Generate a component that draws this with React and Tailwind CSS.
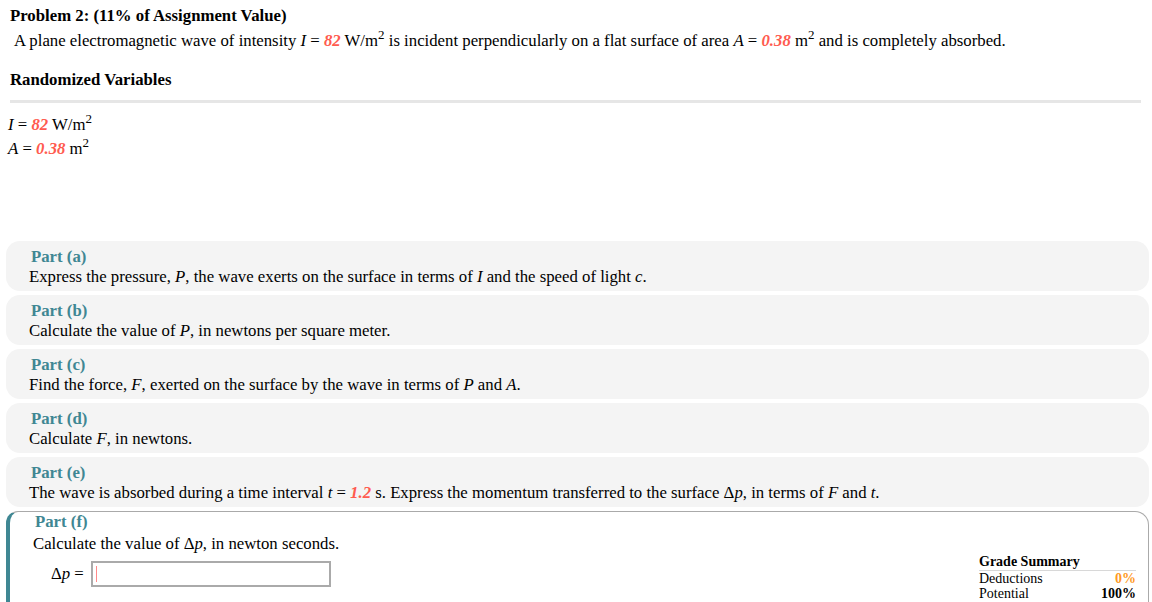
import React from 'react';

const V = ({ children }) => <span className="italic font-bold text-[#ff5b4f]">{children}</span>;
const I = ({ children }) => <span className="italic">{children}</span>;
const Sup = () => <sup className="text-[13px] relative -top-[7px]">2</sup>;

const parts = [
  { label: 'Part (a)', body: <>Express the pressure, <I>P</I>, the wave exerts on the surface in terms of <I>I</I> and the speed of light <I>c</I>.</> },
  { label: 'Part (b)', body: <>Calculate the value of <I>P</I>, in newtons per square meter.</> },
  { label: 'Part (c)', body: <>Find the force, <I>F</I>, exerted on the surface by the wave in terms of <I>P</I> and <I>A</I>.</> },
  { label: 'Part (d)', body: <>Calculate <I>F</I>, in newtons.</> },
  { label: 'Part (e)', body: <>The wave is absorbed during a time interval <I>t</I> = <V>1.2</V> s. Express the momentum transferred to the surface Δ<I>p</I>, in terms of <I>F</I> and <I>t</I>.</> },
];

export default function App() {
  return (
    <div className="h-[602px] overflow-hidden bg-white text-black text-[16.75px] leading-[20px] font-['Liberation_Serif','Times_New_Roman',serif]">
      <div className="pl-[10px] pt-[6px] font-bold">Problem 2: (11% of Assignment Value)</div>
      <div className="pl-[14px] pt-[5px]">
        A plane electromagnetic wave of intensity <I>I</I> = <V>82</V> W/m<Sup /> is incident perpendicularly on a flat surface of area <I>A</I> = <V>0.38</V> m<Sup /> and is completely absorbed.
      </div>
      <div className="pl-[10px] pt-[19px] font-bold">Randomized Variables</div>
      <div className="ml-[10px] mr-[11px] mt-[10px] h-[3px] bg-[#e6e6e6]"></div>
      <div className="pl-[8px] pt-[12px]">
        <div className="h-[24px]"><I>I</I> = <V>82</V> W/m<Sup /></div>
        <div className="h-[24px]"><I>A</I> = <V>0.38</V> m<Sup /></div>
      </div>
      <div className="mt-[78px] ml-[6px] mr-[3px] flex flex-col gap-[4px]">
        {parts.map((p) => (
          <div key={p.label} className="h-[50px] rounded-[14px] bg-[#f4f4f4] pl-[23px] pt-[6px]">
            <div className="pl-[2px] font-bold text-[#3f8793]">{p.label}</div>
            <div>{p.body}</div>
          </div>
        ))}
        <div className="relative h-[100px] rounded-tl-[12px] rounded-tr-[14px] border-t border-r border-[#aaaaaa] border-l-[4px] border-l-[#3f8793] pl-[23px] pt-[0px]">
          <div className="pl-[2px] font-bold text-[#3f8793]">Part (f)</div>
          <div className="pt-[2px]">Calculate the value of Δ<I>p</I>, in newton seconds.</div>
          <div className="flex items-center mt-[7px] pl-[18px]">
            <span>Δ<I>p</I> =</span>
            <div className="ml-[7px] w-[240px] h-[26px] border-2 border-[#aaaaaa] flex items-center pl-[3px]">
              <div className="w-[1px] h-[16px] bg-[#ff8a8a]"></div>
            </div>
          </div>
          <div className="absolute left-[969px] top-[42px] w-[157px] text-[14px] leading-[15px]">
            <div className="font-bold border-b border-[#d8d8d8] pb-[1px]">Grade Summary</div>
            <div className="flex justify-between"><span>Deductions</span><span className="font-bold text-[#ff9a1f]">0%</span></div>
            <div className="flex justify-between"><span>Potential</span><span className="font-bold">100%</span></div>
          </div>
        </div>
      </div>
    </div>
  );
}
